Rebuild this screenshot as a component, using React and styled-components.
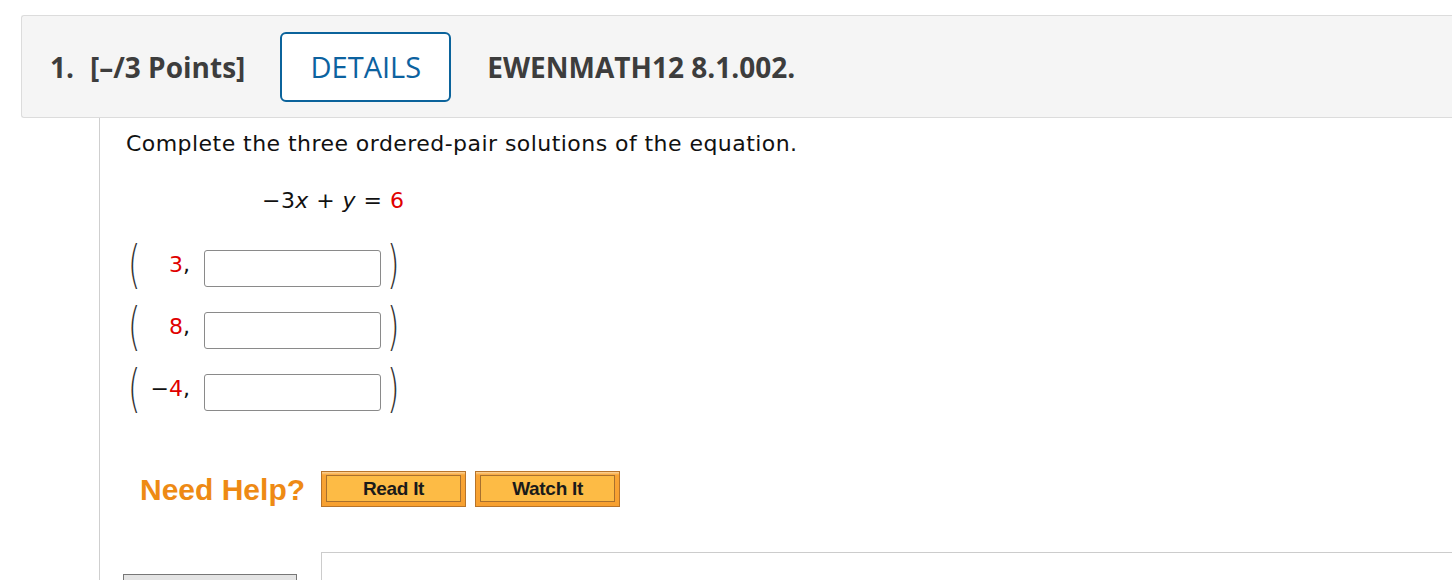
import styled, { createGlobalStyle } from "styled-components";

const GlobalStyle = createGlobalStyle`
  html, body {
    margin: 0;
    padding: 0;
    background: #fff;
  }
`;

const Page = styled.div`
  width: 1452px;
  height: 580px;
  overflow: hidden;
  padding: 15px 0 0 21px;
  box-sizing: border-box;
`;

const Header = styled.div`
  display: flex;
  align-items: center;
  height: 101px;
  padding-left: 28px;
  background: #f5f5f5;
  border: 1px solid #dcdcdc;
  border-right: none;
  border-radius: 3px 0 0 3px;
  font-family: "Open Sans", "Liberation Sans", sans-serif;
  font-size: 28px;
  font-weight: 700;
  color: #3d3d3d;
`;

const Num = styled.span`
  margin-right: 16px;
`;

const Points = styled.span`
  margin-right: 35px;
`;

const DetailsButton = styled.button`
  width: 171px;
  height: 70px;
  margin-right: 36px;
  border: 2px solid #0b639b;
  border-radius: 6px;
  background: #fff;
  color: #0c629f;
  font-family: "Open Sans", "Liberation Sans", sans-serif;
  font-size: 29px;
  font-weight: 400;
  padding: 0;
`;

const Content = styled.div`
  margin-left: 78px;
  border-left: 1px solid #cfcfcf;
  padding-left: 26px;
  height: 470px;
  font-family: "DejaVu Sans", Verdana, sans-serif;
  font-size: 22px;
  letter-spacing: 0.45px;
  color: #111;
`;

const Prompt = styled.p`
  margin: 0;
  padding-top: 12px;
  line-height: 28px;
`;

const Equation = styled.div`
  margin: 29px 0 0 136px;
  line-height: 28px;
`;

const Red = styled.span`
  color: #e00000;
`;

const Var = styled.i`
  font-style: italic;
`;

const Pairs = styled.div`
  margin-top: 18px;
  display: flex;
  flex-direction: column;
`;

const Pair = styled.div`
  display: flex;
  align-items: center;
  height: 62px;
`;

const Paren = styled.span`
  display: inline-block;
  font-family: "DejaVu Sans", sans-serif;
  font-weight: 300;
  font-size: 32px;
  color: #333;
  transform: scaleY(1.6);
  width: 12px;
  text-align: center;
  margin-left: ${(p) => (p.$close ? "6px" : "2px")};
`;

const Value = styled.span`
  width: 50px;
  text-align: right;
  margin-right: 14px;
  white-space: nowrap;
  letter-spacing: 0;
`;

const Comma = styled.span`
  color: #111;
`;

const Answer = styled.input`
  width: 177px;
  height: 37px;
  box-sizing: border-box;
  border: 1px solid #8a8a8a;
  border-radius: 3px;
  background: #fff;
  margin-top: 8px;
`;

const HelpRow = styled.div`
  margin-top: 52px;
  margin-left: 14px;
  display: flex;
  align-items: center;
  gap: 9px;
`;

const HelpLabel = styled.span`
  font-family: "Liberation Sans", Arial, sans-serif;
  font-weight: 700;
  font-size: 30px;
  letter-spacing: 0;
  color: #ee8a14;
  margin-right: 7px;
  margin-top: 2px;
`;

const HelpButton = styled.button`
  width: 145px;
  height: 36px;
  padding: 3px 4px 4px;
  box-sizing: border-box;
  border: 1px solid #b8742a;
  background: linear-gradient(#fcd49a 0, #f8a435 3px, #f7a030 100%);
  display: flex;
`;

const HelpInner = styled.span`
  flex: 1;
  display: flex;
  align-items: center;
  justify-content: center;
  border: 1px solid #a8702e;
  background: #fdbb45;
  font-family: "Liberation Sans", Arial, sans-serif;
  font-weight: 700;
  font-size: 19px;
  letter-spacing: -0.3px;
  color: #1a1a1a;
`;

const Bottom = styled.div`
  margin-top: 45px;
  display: flex;
  align-items: flex-start;
`;

const GreyTab = styled.div`
  width: 172px;
  height: 20px;
  margin-top: 22px;
  margin-left: -3px;
  background: #e4e4e4;
  border: 1px solid #777;
`;

const Panel = styled.div`
  flex: 1;
  margin-left: 24px;
  height: 40px;
  border-top: 1px solid #cccccc;
  border-left: 1px solid #cccccc;
`;

const rows = [
  { sign: "", n: "3" },
  { sign: "", n: "8" },
  { sign: "−", n: "4" },
];

export default function App() {
  return (
    <Page>
      <GlobalStyle />
      <Header>
        <Num>1.</Num>
        <Points>[–/3 Points]</Points>
        <DetailsButton>DETAILS</DetailsButton>
        <span>EWENMATH12 8.1.002.</span>
      </Header>
      <Content>
        <Prompt>Complete the three ordered-pair solutions of the equation.</Prompt>
        <Equation>
          −3<Var>x</Var> + <Var>y</Var> = <Red>6</Red>
        </Equation>
        <Pairs>
          {rows.map((r, i) => (
            <Pair key={i}>
              <Paren>(</Paren>
              <Value>
                {r.sign}
                <Red>{r.n}</Red>
                <Comma>,</Comma>
              </Value>
              <Answer type="text" />
              <Paren $close>)</Paren>
            </Pair>
          ))}
        </Pairs>
        <HelpRow>
          <HelpLabel>Need Help?</HelpLabel>
          <HelpButton>
            <HelpInner>Read It</HelpInner>
          </HelpButton>
          <HelpButton>
            <HelpInner>Watch It</HelpInner>
          </HelpButton>
        </HelpRow>
        <Bottom>
          <GreyTab />
          <Panel />
        </Bottom>
      </Content>
    </Page>
  );
}
